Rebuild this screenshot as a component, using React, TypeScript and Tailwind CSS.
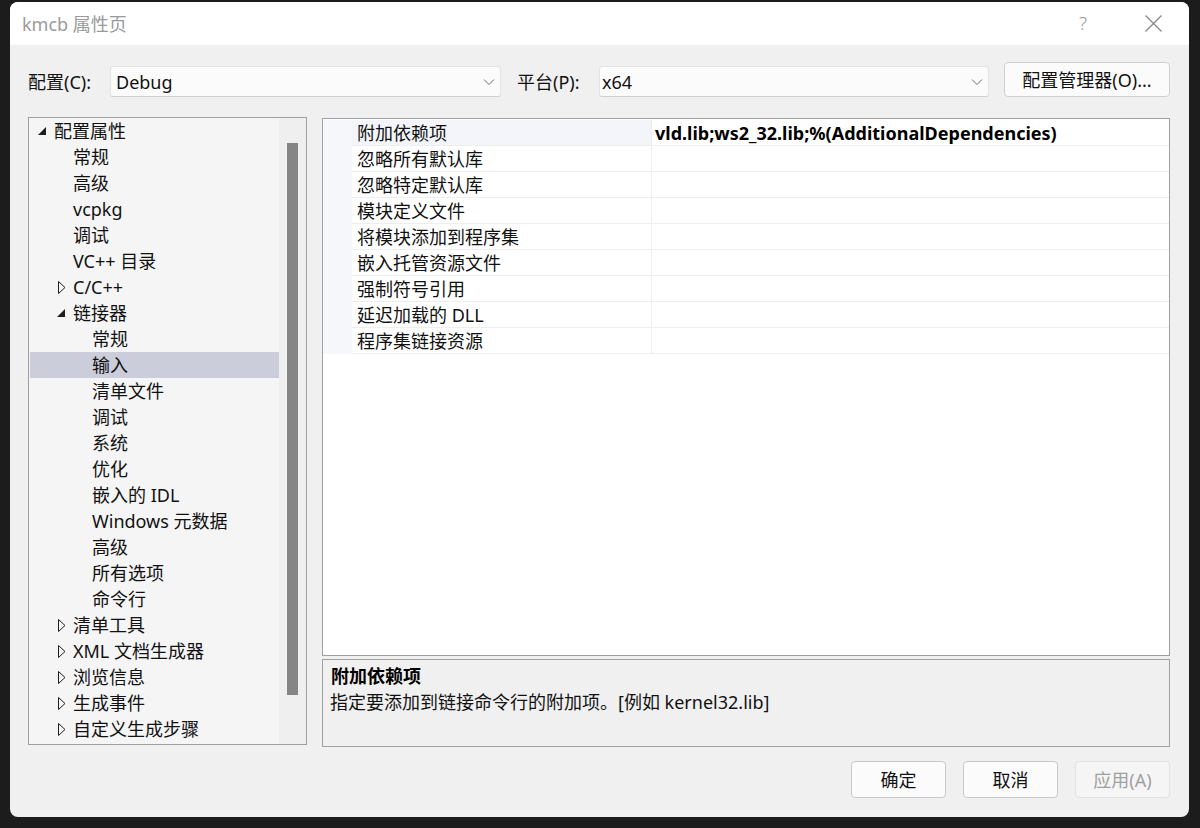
import React from 'react';

type TreeItem = { t: string; lvl: 0 | 1 | 2; tri?: 'open' | 'closed'; sel?: boolean };

const tree: TreeItem[] = [
  { t: '配置属性', lvl: 0, tri: 'open' },
  { t: '常规', lvl: 1 },
  { t: '高级', lvl: 1 },
  { t: 'vcpkg', lvl: 1 },
  { t: '调试', lvl: 1 },
  { t: 'VC++ 目录', lvl: 1 },
  { t: 'C/C++', lvl: 1, tri: 'closed' },
  { t: '链接器', lvl: 1, tri: 'open' },
  { t: '常规', lvl: 2 },
  { t: '输入', lvl: 2, sel: true },
  { t: '清单文件', lvl: 2 },
  { t: '调试', lvl: 2 },
  { t: '系统', lvl: 2 },
  { t: '优化', lvl: 2 },
  { t: '嵌入的 IDL', lvl: 2 },
  { t: 'Windows 元数据', lvl: 2 },
  { t: '高级', lvl: 2 },
  { t: '所有选项', lvl: 2 },
  { t: '命令行', lvl: 2 },
  { t: '清单工具', lvl: 1, tri: 'closed' },
  { t: 'XML 文档生成器', lvl: 1, tri: 'closed' },
  { t: '浏览信息', lvl: 1, tri: 'closed' },
  { t: '生成事件', lvl: 1, tri: 'closed' },
  { t: '自定义生成步骤', lvl: 1, tri: 'closed' },
];

const props = [
  '附加依赖项',
  '忽略所有默认库',
  '忽略特定默认库',
  '模块定义文件',
  '将模块添加到程序集',
  '嵌入托管资源文件',
  '强制符号引用',
  '延迟加载的 DLL',
  '程序集链接资源',
];

const indent: Record<number, string> = { 0: 'pl-[7px]', 1: 'pl-[26px]', 2: 'pl-[45px]' };

function Tri({ kind }: { kind?: 'open' | 'closed' }) {
  return (
    <div className="w-[17px] h-[26px] flex items-center">
      {kind === 'open' && (
        <svg width="9" height="9" viewBox="0 0 9 9" className="ml-[1px] mt-[1px]">
          <polygon points="8,0 8,8 0,8" fill="#1e1e1e" />
        </svg>
      )}
      {kind === 'closed' && (
        <svg width="8" height="13" viewBox="0 0 8 13" className="ml-[2px]">
          <polygon points="0.5,0.5 7,6.5 0.5,12.5" fill="none" stroke="#1e1e1e" strokeWidth="1" />
        </svg>
      )}
    </div>
  );
}

function Chevron() {
  return (
    <svg width="12" height="8" viewBox="0 0 12 8">
      <polyline points="1,1.5 6,6.5 11,1.5" fill="none" stroke="#6b6b6b" strokeWidth="1" />
    </svg>
  );
}

export default function App() {
  return (
    <div className="w-[1200px] h-[828px] bg-[#1c1c1c] pt-[2px] pl-[10px] font-[family-name:'Noto_Sans','Noto_Sans_CJK_SC',sans-serif] text-[#111111]">
      <div className="w-[1179px] h-[815px] rounded-[8px] overflow-hidden bg-[#f0f0f0] flex flex-col">
        {/* title bar */}
        <div className="h-[43px] bg-white flex items-center pl-[12px] shrink-0">
          <span className="text-[18px] leading-none text-[#9a9a9a]">kmcb 属性页</span>
          <span className="ml-auto text-[19px] leading-none text-[#9a9a9a] font-light">?</span>
          <svg width="17" height="17" viewBox="0 0 17 17" className="ml-[58px] mr-[27px]">
            <line x1="0.5" y1="0.5" x2="16.5" y2="16.5" stroke="#8a8a8a" strokeWidth="1.2" />
            <line x1="16.5" y1="0.5" x2="0.5" y2="16.5" stroke="#8a8a8a" strokeWidth="1.2" />
          </svg>
        </div>

        <div className="flex flex-col pl-[18px] pr-[19px]">
          {/* config row */}
          <div className="mt-[18px] h-[34px] flex items-end">
            <div className="w-[82px] h-[31px] flex items-center text-[18px] leading-none">配置(C):</div>
            <div className="w-[391px] h-[31px] bg-[#fbfbfb] border border-[#e3e3e3] border-b-[#cfcfcf] rounded-[3px] flex items-center pl-[5px] pr-[5px]">
              <span className="text-[18px] leading-none">Debug</span>
              <span className="ml-auto"><Chevron /></span>
            </div>
            <div className="w-[98px] h-[31px] flex items-center pl-[16px] text-[18px] leading-none">平台(P):</div>
            <div className="w-[390px] h-[31px] bg-[#fbfbfb] border border-[#e3e3e3] border-b-[#cfcfcf] rounded-[3px] flex items-center pl-[2px] pr-[5px]">
              <span className="text-[18px] leading-none">x64</span>
              <span className="ml-auto"><Chevron /></span>
            </div>
            <div className="ml-auto w-[166px] h-[35px] bg-[#fbfbfb] border border-[#d0d0d0] rounded-[4px] flex items-center justify-center text-[18px] leading-none">
              配置管理器(O)...
            </div>
          </div>

          {/* panels */}
          <div className="mt-[20px] flex items-start">
            {/* tree */}
            <div className="w-[279px] h-[628px] border border-[#a0a0a0] bg-[#f5f5f5] flex">
              <div className="w-[250px] pl-[1px] flex flex-col">
                {tree.map((it, i) => (
                  <div
                    key={i}
                    className={`h-[26px] flex items-center ${indent[it.lvl]} ${it.sel ? 'bg-[#cbcdda]' : ''}`}
                  >
                    <Tri kind={it.tri} />
                    <span className="text-[18px] leading-none whitespace-nowrap">{it.t}</span>
                  </div>
                ))}
              </div>
              <div className="w-[27px] bg-[#efefef] flex flex-col">
                <div className="ml-[8px] mt-[25px] w-[11px] h-[552px] bg-[#858585]" />
              </div>
            </div>

            {/* right column */}
            <div className="ml-[15px] w-[848px] flex flex-col">
              <div className="mt-[1px] h-[538px] border border-[#a0a0a0] bg-white pt-[1px]">
                {props.map((p, i) => (
                  <div key={i} className="h-[26px] flex">
                    <div className="w-[29px] bg-[#f5f7fa]" />
                    <div
                      className={`w-[300px] flex items-center pl-[5px] border-b border-r border-[#eeeeee] ${i === 0 ? 'bg-[#f3f5fa]' : ''}`}
                    >
                      <span className="text-[18px] leading-none whitespace-nowrap">{p}</span>
                    </div>
                    <div className="flex-1 flex items-center pl-[3px] border-b border-[#eeeeee]">
                      {i === 0 && (
                        <span className="text-[18px] leading-none font-bold whitespace-nowrap text-black">
                          vld.lib;ws2_32.lib;%(AdditionalDependencies)
                        </span>
                      )}
                    </div>
                  </div>
                ))}
              </div>
              <div className="mt-[3px] h-[88px] border border-[#a0a0a0] bg-[#f0f0f0] pl-[8px] pt-[3px]">
                <div className="h-[26px] flex items-center text-[18px] leading-none font-bold text-black">附加依赖项</div>
                <div className="h-[26px] flex items-center text-[18px] leading-none -ml-[1px]">
                  指定要添加到链接命令行的附加项。[例如 kernel32.lib]
                </div>
              </div>
            </div>
          </div>

          {/* buttons */}
          <div className="mt-[14px] flex justify-end gap-[17px]">
            <div className="w-[95px] h-[37px] bg-[#fbfbfb] border border-[#c8c8c8] rounded-[4px] flex items-center justify-center text-[18px] leading-none">确定</div>
            <div className="w-[95px] h-[37px] bg-[#fbfbfb] border border-[#c8c8c8] rounded-[4px] flex items-center justify-center text-[18px] leading-none">取消</div>
            <div className="w-[95px] h-[37px] bg-[#f5f5f5] border border-[#e2e2e2] rounded-[4px] flex items-center justify-center text-[18px] leading-none text-[#a0a0a0]">应用(A)</div>
          </div>
        </div>
      </div>
    </div>
  );
}
